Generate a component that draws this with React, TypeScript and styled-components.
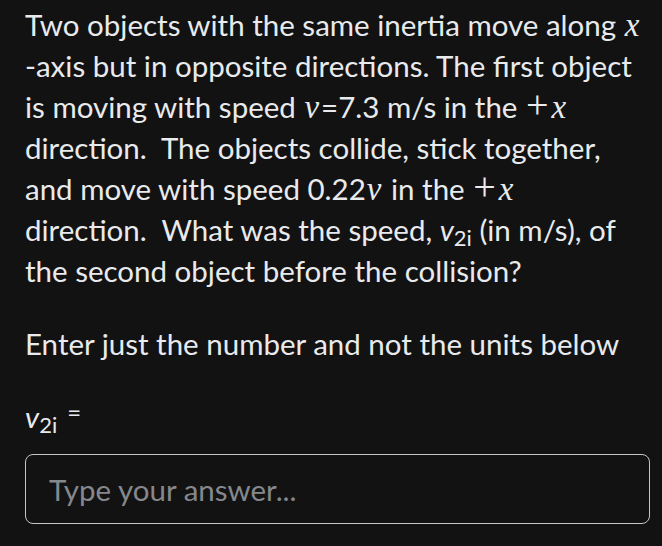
import React from 'react';
import styled, { createGlobalStyle } from 'styled-components';

const GlobalStyle = createGlobalStyle`
	html, body {
		margin: 0;
		padding: 0;
		background: #121212;
	}
`;

const Page = styled.div`
	padding: 4px 8px 0 25px;
	font-family: 'Lato', 'Liberation Sans', sans-serif;
	color: #e8eaed;
	font-size: 29.5px;
	line-height: 41px;
`;

const Paragraph = styled.p<{ $gap?: number }>`
	margin: 0 0 ${p => p.$gap ?? 32}px 0;
`;

const Line = styled.span`
	display: block;
	white-space: pre;
`;

const MathVar = styled.span`
	font-family: 'Liberation Serif', 'DejaVu Serif', serif;
	font-style: italic;
	font-size: 33px;
	line-height: 0;
	padding: 0 2px 0 1px;
`;

const MathOp = styled.span`
	font-family: 'Liberation Serif', 'DejaVu Serif', serif;
	font-size: 40px;
	line-height: 0;
	margin: 0 2px 0 1px;
`;

const Var = styled.span<{ $size?: number }>`
	font-style: italic;
	font-size: ${p => p.$size ?? 29.5}px;
`;

const Sub = styled.sub<{ $size?: number }>`
	font-size: ${p => p.$size ?? 22}px;
	font-style: normal;
	line-height: 0;
	vertical-align: -5px;
`;

const AnswerLabel = styled.div`
	display: flex;
	align-items: flex-start;
	gap: 10px;
	height: 40px;
	margin-top: 28px;
	margin-bottom: 18px;
`;

const Equals = styled.span`
	font-size: 24px;
	line-height: 20px;
	margin-top: 6px;
`;

const AnswerBox = styled.div`
	box-sizing: border-box;
	width: 625px;
	height: 70px;
	border: 1px solid #c4c6c9;
	border-radius: 8px;
	display: flex;
	align-items: center;
	padding-left: 23px;
`;

const Placeholder = styled.span`
	color: #85888c;
	font-size: 29.5px;
`;

const X = () => <MathVar>x</MathVar>;
const PlusX = () => (
	<>
		<MathOp>+</MathOp>
		<MathVar>x</MathVar>
	</>
);

export default function App() {
	return (
		<>
			<GlobalStyle />
			<Page>
				<Paragraph>
					<Line>Two objects with the same inertia move along <X /></Line>
					<Line>-axis but in opposite directions. The first object</Line>
					<Line>
						is moving with speed <MathVar>v</MathVar>=7.3 m/s in the <PlusX />
					</Line>
					<Line>direction.  The objects collide, stick together,</Line>
					<Line>
						and move with speed 0.22<MathVar>v</MathVar> in the <PlusX />
					</Line>
					<Line>
						direction.  What was the speed, <Var>v<Sub>2i</Sub></Var> (in m/s), of
					</Line>
					<Line>the second object before the collision?</Line>
				</Paragraph>
				<Paragraph>
					<Line>Enter just the number and not the units below</Line>
				</Paragraph>
				<AnswerLabel>
					<Var>
						v<Sub>2i</Sub>
					</Var>
					<Equals>=</Equals>
				</AnswerLabel>
				<AnswerBox>
					<Placeholder>Type your answer...</Placeholder>
				</AnswerBox>
			</Page>
		</>
	);
}
